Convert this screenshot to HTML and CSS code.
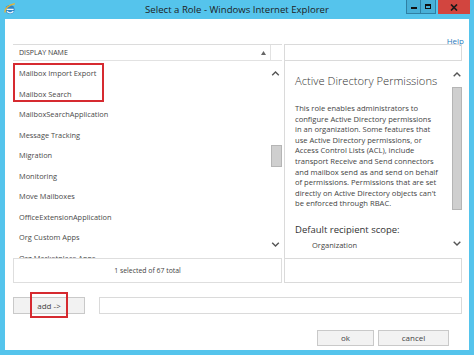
FILE: index.html
```html
<!DOCTYPE html>
<html>
<head>
<meta charset="utf-8">
<link rel="stylesheet" href="styles.css">
</head>
<body>
<div class="window">
  <div class="titlebar">
    <div class="tb-icon">
      <svg width="12" height="12" viewBox="0 0 12 12">
        <circle cx="6" cy="6.5" r="4.6" fill="#2f86c9"/>
        <path d="M2.5 6.3 H9.6 M3 8.2 C4.5 10.5 8 10.2 9.3 8.2" stroke="#e8f4fb" stroke-width="1.3" fill="none"/>
        <path d="M1.2 9.5 C0.2 6 5 1.5 10.8 0.8" stroke="#e3b53a" stroke-width="1.4" fill="none"/>
      </svg>
    </div>
    <div class="tb-title">Select a Role - Windows Internet Explorer</div>
    <div class="tb-controls">
      <div class="tb-btn tb-min"><span class="min-glyph"></span></div>
      <div class="tb-btn tb-max"><span class="max-glyph"></span></div>
      <div class="tb-btn tb-close">
        <svg width="8" height="7" viewBox="0 0 8 7"><path d="M1 0.5 L7 6.5 M7 0.5 L1 6.5" stroke="#1a1a1a" stroke-width="1.7"/></svg>
      </div>
    </div>
  </div>
  <div class="client">
    <div class="help-row"><span class="help">Help</span></div>
    <div class="main">
      <div class="left-col">
        <div class="list-header">
          <div class="lh-name">DISPLAY NAME <span class="sort">
            <svg width="5" height="4" viewBox="0 0 5 4"><path d="M0 4 L2.5 0 L5 4 Z" fill="#666"/></svg></span></div>
          <div class="lh-spacer"></div>
        </div>
        <div class="list-body">
          <div class="items">
            <div class="item">Mailbox Import Export</div>
            <div class="item">Mailbox Search</div>
            <div class="item">MailboxSearchApplication</div>
            <div class="item">Message Tracking</div>
            <div class="item">Migration</div>
            <div class="item">Monitoring</div>
            <div class="item">Move Mailboxes</div>
            <div class="item">OfficeExtensionApplication</div>
            <div class="item">Org Custom Apps</div>
            <div class="item">Org Marketplace Apps</div>
            <div class="highlight hl-items"></div>
          </div>
          <div class="scrollbar sb-left">
            <svg width="12" height="197" viewBox="0 0 12 197">
              <path d="M2.2 14.3 L5.5 11 L8.8 14.3" stroke="#555" stroke-width="1.4" fill="none"/>
              <rect x="1.5" y="84.5" width="10" height="21" fill="#cfcfcf" stroke="#b5b5b5"/>
              <path d="M2.2 181.7 L5.5 185 L8.8 181.7" stroke="#555" stroke-width="1.4" fill="none"/>
            </svg>
          </div>
        </div>
        <div class="count-box">1 selected of 67 total</div>
      </div>
      <div class="right-col">
        <div class="search-box"></div>
        <div class="detail">
          <div class="detail-content">
            <div class="detail-title">Active Directory Permissions</div>
            <div class="detail-desc">This role enables administrators to<br>configure Active Directory permissions<br>in an organization. Some features that<br>use Active Directory permissions, or<br>Access Control Lists (ACL), include<br>transport Receive and Send connectors<br>and mailbox send as and send on behalf<br>of permissions. Permissions that are set<br>directly on Active Directory objects can't<br>be enforced through RBAC.</div>
            <div class="scope-label">Default recipient scope:</div>
            <div class="scope-value">Organization</div>
          </div>
          <div class="scrollbar sb-right">
            <svg width="10" height="197" viewBox="0 0 10 197">
              <path d="M1.7 15.3 L5 12 L8.3 15.3" stroke="#555" stroke-width="1.4" fill="none"/>
              <rect x="0.5" y="26.5" width="9" height="122" fill="#cfcfcf" stroke="#b5b5b5"/>
              <path d="M1.7 180.7 L5 184 L8.3 180.7" stroke="#555" stroke-width="1.4" fill="none"/>
            </svg>
          </div>
        </div>
        <div class="bottom-box"></div>
      </div>
    </div>
    <div class="add-row">
      <div class="btn add-btn">add -&gt;<span class="highlight hl-add"></span></div>
      <div class="add-input"></div>
    </div>
    <div class="action-row">
      <div class="btn ok-btn">ok</div>
      <div class="btn cancel-btn">cancel</div>
    </div>
  </div>
</div>
</body>
</html>
```

FILE: styles.css
```css
* { box-sizing: border-box; }
html, body { margin: 0; padding: 0; }
body {
  width: 474px;
  height: 355px;
  overflow: hidden;
  font-family: "Open Sans", "Noto Sans", sans-serif;
  color: #444;
}
.window {
  width: 474px;
  height: 355px;
  background: #55c4ec;
  display: flex;
  flex-direction: column;
  padding: 0 5px 5px 5px;
}
.titlebar {
  height: 19px;
  flex: none;
  display: flex;
  align-items: flex-start;
  margin-left: -1px;
}
.tb-icon { flex: none; width: 66px; padding: 3px 0 0 0; line-height: 0; }
.tb-title {
  flex: 1;
  font-size: 9.6px;
  line-height: 19px;
  color: #1d1d1d;
  text-align: center;
  white-space: nowrap;
}
.tb-controls {
  flex: none;
  width: 66px;
  display: flex;
  justify-content: flex-end;
  margin-right: -1px;
}
.tb-btn {
  flex: none;
  height: 14px;
  display: flex;
  align-items: center;
  justify-content: center;
}
.tb-min, .tb-max {
  width: 15px;
  background: #48b0d8;
  border: 1px solid #2f7fa3;
  border-top: none;
}
.tb-max { border-left: none; margin-right: 2px; }
.min-glyph { width: 6px; height: 2px; background: #111; margin-top: 3px; }
.max-glyph { width: 6px; height: 5px; border: 1px solid #111; border-top-width: 2px; }
.tb-close { width: 32px; background: #d2453f; }

.client {
  flex: 1;
  background: #fff;
  padding: 0 7px 0 8px;
  display: flex;
  flex-direction: column;
}
.help-row {
  height: 25px;
  padding-top: 8px;
  text-align: right;
  margin-right: -2px;
}
.help {
  font-size: 8px;
  line-height: 10px;
  color: #2b7bbd;
}
.main {
  display: grid;
  grid-template-columns: 269px 178px;
  column-gap: 2px;
}
.left-col, .right-col { display: flex; flex-direction: column; min-width: 0; }
.list-header {
  height: 17px;
  border-top: 1px solid #dcdcdc;
  border-bottom: 1px solid #e2e2e2;
  display: grid;
  grid-template-columns: 1fr 12px;
}
.lh-name {
  font-size: 7px;
  line-height: 15px;
  padding-left: 6px;
  color: #3c3c3c;
  display: flex;
  justify-content: space-between;
  align-items: center;
  padding-right: 4px;
}
.sort { line-height: 0; }
.lh-spacer { border-left: 1px solid #e2e2e2; }
.list-body {
  height: 197px;
  display: flex;
  overflow: hidden;
}
.items {
  flex: 1;
  min-width: 0;
  position: relative;
  padding-top: 2px;
  overflow: hidden;
}
.item {
  height: 20.5px;
  line-height: 20.5px;
  font-size: 7.4px;
  padding-left: 6px;
  color: #4a4a4a;
  white-space: nowrap;
}
.highlight {
  position: absolute;
  border: 2px solid #d62a30;
  pointer-events: none;
}
.hl-items { left: 0; top: 2px; width: 91px; height: 39px; }
.scrollbar {
  flex: none;
  line-height: 0;
}
.sb-left { width: 12px; }
.sb-right { width: 10px; }
.count-box {
  height: 25px;
  border: 1px solid #dedede;
  text-align: center;
  font-size: 6.9px;
  line-height: 23px;
  color: #444;
}
.search-box {
  height: 17px;
  border: 1px solid #dadada;
}
.detail {
  height: 197px;
  border-left: 1px solid #dadada;
  display: flex;
}
.detail-content {
  flex: 1;
  min-width: 0;
  padding: 12px 0 0 10px;
  overflow: hidden;
}
.detail-title {
  font-size: 11.2px;
  line-height: 16px;
  color: #333;
  font-weight: 300;
  white-space: nowrap;
}
.detail-desc {
  margin-top: 14px;
  font-size: 7.6px;
  line-height: 10.6px;
  color: #444;
  white-space: nowrap;
}
.scope-label {
  margin-top: 14px;
  font-size: 9.5px;
  line-height: 14px;
  color: #333;
}
.scope-value {
  margin-top: 3px;
  padding-left: 17px;
  font-size: 7.5px;
  line-height: 10px;
  color: #444;
}
.bottom-box {
  height: 25px;
  border: 1px solid #dadada;
}
.add-row {
  margin-top: 14px;
  height: 17px;
  display: flex;
  gap: 14px;
}
.btn {
  background: #f2f2f2;
  border: 1px solid #c9c9c9;
  font-size: 8px;
  color: #444;
  text-align: center;
  line-height: 15px;
}
.add-btn { width: 72px; position: relative; }
.hl-add { left: 16px; top: -6px; width: 38px; height: 26px; }
.add-input {
  flex: 1;
  border: 1px solid #dadada;
}
.action-row {
  margin-top: 16px;
  height: 16px;
  display: flex;
  justify-content: flex-end;
  gap: 4px;
  padding-right: 13px;
}
.ok-btn { width: 57px; line-height: 14px; }
.cancel-btn { width: 71px; line-height: 14px; }
```
